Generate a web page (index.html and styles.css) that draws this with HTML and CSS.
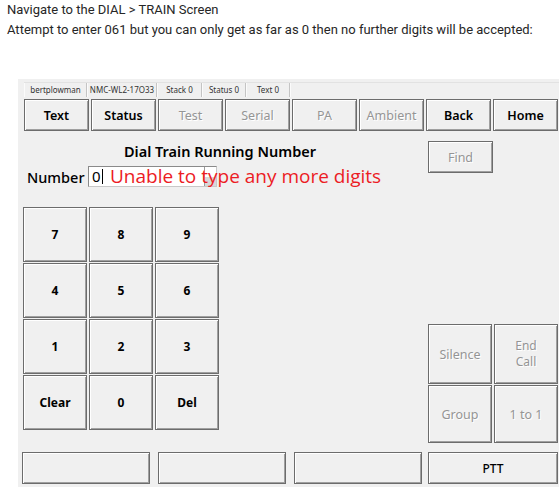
FILE: index.html
```html
<!DOCTYPE html>
<html>
<head>
<meta charset="utf-8">
<link rel="stylesheet" href="styles.css">
</head>
<body>
<div class="intro">
  <p>Navigate to the DIAL &gt; TRAIN Screen</p>
  <p>Attempt to enter 061 but you can only get as far as 0 then no further digits will be accepted:</p>
</div>
<div class="app">
  <div class="statusbar">
    <span class="cell c1">bertplowman</span>
    <span class="cell c2">NMC-WL2-17O33</span>
    <span class="cell c3">Stack 0</span>
    <span class="cell c4">Status 0</span>
    <span class="cell c5">Text 0</span>
    <span class="cell rest"></span>
  </div>
  <div class="toprow">
    <div class="btn bold">Text</div>
    <div class="btn bold">Status</div>
    <div class="btn off">Test</div>
    <div class="btn off">Serial</div>
    <div class="btn off">PA</div>
    <div class="btn off">Ambient</div>
    <div class="btn bold">Back</div>
    <div class="btn bold">Home</div>
  </div>
  <div class="body">
    <div class="main">
      <div class="title">Dial Train Running Number</div>
      <div class="numrow">
        <span class="label">Number</span>
        <div class="input"><span class="val">0</span><span class="caret"></span><span class="grip"></span></div>
        <span class="note">Unable to type any more digits</span>
      </div>
      <div class="keypad">
        <div class="btn key">7</div>
        <div class="btn key">8</div>
        <div class="btn key">9</div>
        <div class="btn key">4</div>
        <div class="btn key">5</div>
        <div class="btn key">6</div>
        <div class="btn key">1</div>
        <div class="btn key">2</div>
        <div class="btn key">3</div>
        <div class="btn key">Clear</div>
        <div class="btn key">0</div>
        <div class="btn key">Del</div>
      </div>
    </div>
    <div class="side">
      <div class="btn off find">Find</div>
      <div class="callgrid">
        <div class="btn off">Silence</div>
        <div class="btn off two"><span class="ln">End</span><span class="ln">Call</span></div>
        <div class="btn off">Group</div>
        <div class="btn off">1 to 1</div>
      </div>
    </div>
  </div>
  <div class="bottomrow">
    <div class="btn b1"></div>
    <div class="btn b2"></div>
    <div class="btn b3"></div>
    <div class="btn b4 ptt">PTT</div>
  </div>
</div>
</body>
</html>
```
FILE: styles.css
```css
html, body {
  margin: 0;
  padding: 0;
  background: #fff;
}
.intro {
  padding-left: 7px;
  font-family: Roboto, "Liberation Sans", sans-serif;
  font-size: 13px;
  line-height: 20px;
  color: #262626;
}
.intro p {
  margin: 0;
}
.app {
  box-sizing: border-box;
  margin-top: 39px;
  margin-left: 18px;
  width: 541px;
  height: 408px;
  background: #f0f0f0;
  padding: 3px 0 0 6px;
  font-family: "Noto Sans", "Open Sans", sans-serif;
  color: #000;
}
.statusbar {
  display: flex;
  height: 15px;
  border-top: 1px solid #e2e2e2;
  box-sizing: border-box;
}
.cell {
  box-sizing: border-box;
  height: 14px;
  border-right: 1px solid #c4c4c4;
  border-left: 1px solid #fbfbfb;
  font-size: 8px;
  line-height: 13px;
  text-align: center;
  color: #333;
  white-space: nowrap;
}
.c1 { width: 63px; }
.c2 { width: 70px; }
.c3 { width: 45px; }
.c4 { width: 44px; }
.c5 { width: 44px; }
.rest { flex: 1; border-right: none; }

.btn {
  box-sizing: border-box;
  display: flex;
  align-items: center;
  justify-content: center;
  text-align: center;
  background: #f0f0f0;
  border: 1px solid #6c6c6c;
  box-shadow: inset 1px 1px #ffffff, inset -1px -1px #a0a0a0;
  font-size: 12px;
  color: #000;
}
.bold {
  font-weight: 600;
  font-size: 12.5px;
}
.off {
  color: #959595;
  text-shadow: 1px 1px 0 #ffffff;
  font-size: 12.5px;
}
.toprow {
  display: flex;
  gap: 2px;
  margin-top: 2px;
}
.toprow .btn {
  width: 65px;
  height: 32px;
}
.body {
  display: grid;
  grid-template-columns: 392px 1fr;
  height: 321px;
}
.title {
  margin-top: 10px;
  height: 20px;
  line-height: 20px;
  text-align: center;
  font-size: 14.5px;
  font-weight: 600;
}
.numrow {
  position: relative;
  display: flex;
  align-items: center;
  margin-top: 5px;
  height: 21px;
}
.label {
  width: 64px;
  padding-left: 3px;
  box-sizing: border-box;
  font-size: 14.5px;
  font-weight: 500;
}
.input {
  position: relative;
  box-sizing: border-box;
  width: 129px;
  height: 21px;
  background: #fff;
  border: 1px solid #8a8a8a;
  border-right-color: #c8c8c8;
  border-bottom-color: #c8c8c8;
  display: flex;
  align-items: center;
  padding-left: 3px;
}
.val {
  font-size: 15px;
  line-height: 19px;
}
.caret {
  width: 1px;
  height: 15px;
  background: #000;
  margin-left: 1px;
}
.grip {
  position: absolute;
  right: 0;
  top: 0;
  width: 11px;
  height: 19px;
  border-left: 1px solid #9a9a9a;
  background: linear-gradient(#fff 55%, #d8d8d8 55%);
}
.note {
  position: absolute;
  left: 86px;
  top: 0;
  line-height: 21px;
  font-family: "Open Sans", "Noto Sans", sans-serif;
  font-size: 19px;
  color: #ec1c24;
  white-space: nowrap;
}
.keypad {
  margin-top: 20px;
  margin-left: -1px;
  display: grid;
  grid-template-columns: repeat(3, 64px);
  grid-auto-rows: 55px;
  column-gap: 2px;
  row-gap: 1px;
}
.key {
  font-weight: 700;
  font-size: 12px;
}
.side {
  padding: 10px 0 9px 12px;
  display: flex;
  flex-direction: column;
  justify-content: space-between;
  align-items: flex-start;
}
.find {
  width: 65px;
  height: 32px;
}
.callgrid {
  display: grid;
  grid-template-columns: 64px 64px;
  grid-template-rows: 60px 58px;
  gap: 1px 2px;
}
.two {
  flex-direction: column;
  font-size: 12px;
}
.ln {
  display: block;
  line-height: 16.5px;
}
.bottomrow {
  display: flex;
  margin-left: -2px;
}
.bottomrow .btn {
  height: 32px;
}
.b1 { width: 128px; }
.b2 { width: 128px; margin-left: 8px; }
.b3 { width: 128px; margin-left: 8px; }
.b4 { width: 130px; margin-left: 6px; }
.ptt {
  font-weight: 500;
  font-size: 12px;
}
```
